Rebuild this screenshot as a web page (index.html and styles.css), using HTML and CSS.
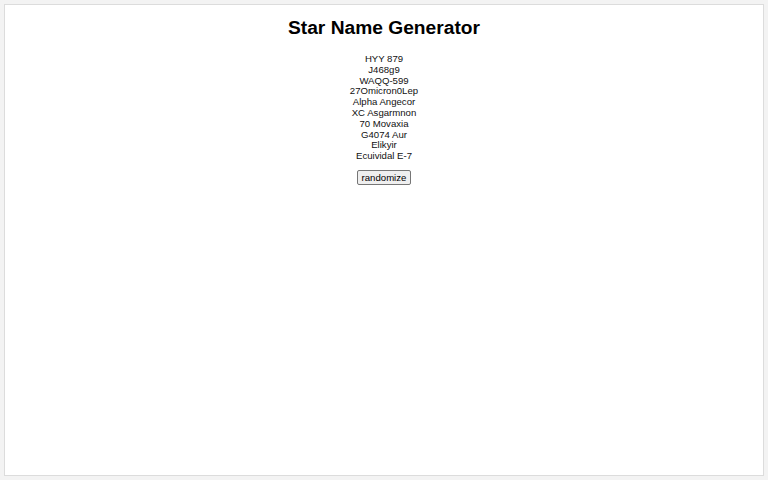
FILE: index.html
```html
<!DOCTYPE html>
<html lang="en">
<head>
<meta charset="utf-8">
<title>Star Name Generator</title>
<link rel="stylesheet" href="styles.css">
</head>
<body>
<main class="frame">
  <h1 class="title">Star Name Generator</h1>
  <ul class="names">
    <li>HYY 879</li>
    <li>J468g9</li>
    <li>WAQQ-599</li>
    <li>27Omicron0Lep</li>
    <li>Alpha Angecor</li>
    <li>XC Asgarmnon</li>
    <li>70 Movaxia</li>
    <li>G4074 Aur</li>
    <li>Elikyir</li>
    <li>Ecuividal E-7</li>
  </ul>
  <button class="randomize" type="button">randomize</button>
</main>
</body>
</html>
```

FILE: styles.css
```css
html {
  background: #f3f3f3;
}
body {
  margin: 0;
  padding: 4px;
  font-family: "Liberation Sans", Arial, sans-serif;
  color: #000;
}
.frame {
  box-sizing: border-box;
  height: 472px;
  background: #fff;
  border: 1px solid #dcdcdc;
  display: flex;
  flex-direction: column;
  align-items: center;
  padding-top: 12px;
}
.title {
  margin: 0 0 15px;
  font-size: 19.2px;
  font-weight: bold;
  line-height: 1.15;
}
.names {
  list-style: none;
  margin: 0;
  padding: 0;
  text-align: center;
  font-size: 9.6px;
  line-height: 10.8px;
  color: #111;
}
.randomize {
  margin-top: 8px;
  font-family: "Liberation Sans", Arial, sans-serif;
  font-size: 9.6px;
  padding: 1px 4px;
  background: #efefef;
  border: 1px solid #767676;
  border-radius: 2px;
  color: #000;
}
```
